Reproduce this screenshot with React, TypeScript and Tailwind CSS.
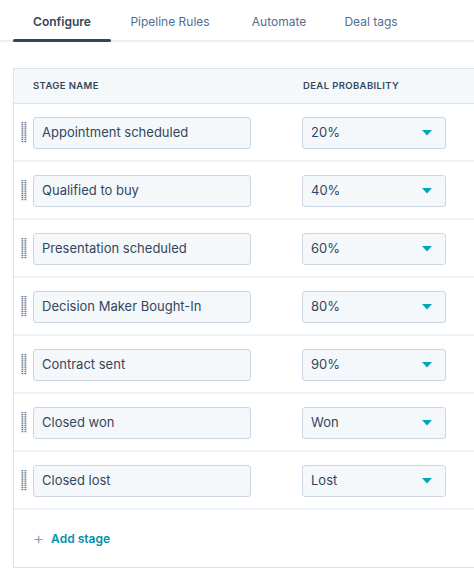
import React from "react";

const stages = [
  { name: "Appointment scheduled", prob: "20%" },
  { name: "Qualified to buy", prob: "40%" },
  { name: "Presentation scheduled", prob: "60%" },
  { name: "Decision Maker Bought-In", prob: "80%" },
  { name: "Contract sent", prob: "90%" },
  { name: "Closed won", prob: "Won" },
  { name: "Closed lost", prob: "Lost" },
];

const tabs = ["Configure", "Pipeline Rules", "Automate", "Deal tags"];

function DragHandle() {
  return (
    <svg width="6" height="21" viewBox="0 0 6 21" className="shrink-0">
      {[...Array(10)].map((_, i) => (
        <g key={i} fill="#5f7389">
          <rect x="0.5" y={i * 2.1} width="1.8" height="1.3" />
          <rect x="3.5" y={i * 2.1} width="1.8" height="1.3" />
        </g>
      ))}
    </svg>
  );
}

export default function App() {
  return (
    <div
      className="w-[474px] h-[573px] bg-white overflow-hidden text-[#33475b]"
      style={{ fontFamily: "'Inter', 'Noto Sans', sans-serif" }}
    >
      {/* Tabs */}
      <div className="relative flex h-[42px] border-b-2 border-[#eaf0f6] pl-[13px]">
        {tabs.map((t, i) => (
          <div
            key={t}
            className={`relative flex items-center justify-center h-full text-[12px] pt-[4px] ${
              i === 0
                ? "w-[98px] font-semibold text-[#33475b]"
                : i === 1
                ? "w-[118px] text-[#516f90]"
                : i === 2
                ? "w-[100px] text-[#516f90]"
                : "w-[84px] text-[#516f90]"
            }`}
          >
            {t}
            {i === 0 && (
              <div className="absolute left-0 right-0 bottom-[-2px] h-[3px] rounded-full bg-[#33475b]" />
            )}
          </div>
        ))}
      </div>

      {/* Table */}
      <div className="ml-[13px] mt-[26px] border border-[#dfe3eb] border-r-0">
        <div className="flex items-center h-[35px] bg-[#f5f8fa] border-b border-[#dfe3eb] text-[9.5px] font-semibold tracking-[0.04em] pt-[1px]">
          <div className="pl-[19px] w-[289px]">STAGE NAME</div>
          <div>DEAL PROBABILITY</div>
        </div>

        {stages.map((s) => (
          <div
            key={s.name}
            className="flex items-center h-[58px] pt-[1px] border-b-2 border-[#eef2f6]"
          >
            <div className="w-[19px] flex justify-center">
              <DragHandle />
            </div>
            <div className="w-[218px] h-[32px] flex items-center px-[8px] bg-[#f5f8fa] border border-[#cbd6e2] rounded-[3px] text-[13px]">
              {s.name}
            </div>
            <div className="ml-[51px] w-[144px] h-[32px] flex items-center justify-between pl-[8px] pr-[13px] bg-[#f5f8fa] border border-[#cbd6e2] rounded-[3px] text-[13px]">
              <span>{s.prob}</span>
              <svg width="10" height="6" viewBox="0 0 10 6">
                <path d="M0 0 L10 0 L5 5.5 Z" fill="#00a4bd" />
              </svg>
            </div>
          </div>
        ))}

        <div className="flex items-center h-[57px] pl-[19px]">
          <span className="text-[#7c98b6] text-[17px] leading-none mr-[7px] font-light">+</span>
          <span className="text-[#0091ae] text-[12px] font-semibold">Add stage</span>
        </div>
      </div>
    </div>
  );
}
